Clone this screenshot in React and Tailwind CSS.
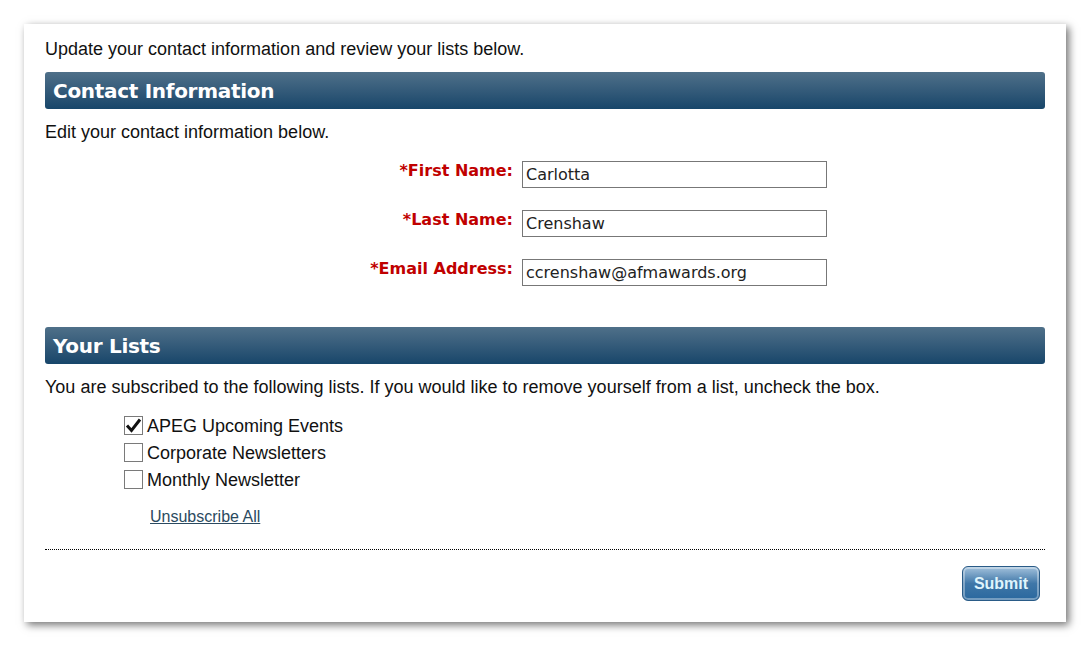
import { useState } from "react";

const fields = [
  { label: "*First Name:", value: "Carlotta" },
  { label: "*Last Name:", value: "Crenshaw" },
  { label: "*Email Address:", value: "ccrenshaw@afmawards.org" },
];

const SectionBar = ({ title }) => (
  <div className="h-[37px] rounded-[3px] bg-gradient-to-b from-[#4f7089] to-[#17466a] px-[8px] flex items-center">
    <h2 className="text-white text-[20px] font-bold font-['DejaVu_Sans',sans-serif] tracking-[-0.3px]">
      {title}
    </h2>
  </div>
);

const CheckBox = ({ checked, onChange }) => (
  <button
    onClick={onChange}
    className="w-[19px] h-[19px] border border-[#7a7a7a] bg-white flex items-center justify-center shrink-0"
  >
    {checked && (
      <svg width="17" height="17" viewBox="0 0 17 17">
        <path d="M2 8.5 L6.5 13.5 L15 2.5" fill="none" stroke="#111" strokeWidth="3" />
      </svg>
    )}
  </button>
);

export default function App() {
  const [lists, setLists] = useState([
    { name: "APEG Upcoming Events", on: true },
    { name: "Corporate Newsletters", on: false },
    { name: "Monthly Newsletter", on: false },
  ]);

  const toggle = (i) =>
    setLists(lists.map((l, j) => (j === i ? { ...l, on: !l.on } : l)));

  return (
    <div className="min-h-[648px] bg-white pt-[24px] pl-[24px] font-['Liberation_Sans',Arial,sans-serif] text-[#111]">
      <div className="w-[1042px] h-[598px] bg-white shadow-[3px_3px_8px_rgba(0,0,0,0.55)] px-[21px] pt-[15px]">
        <p className="text-[18px] leading-[20px]">
          Update your contact information and review your lists below.
        </p>

        {/* Contact Information */}
        <div className="mt-[13px]">
          <SectionBar title="Contact Information" />
        </div>
        <p className="text-[18px] leading-[20px] mt-[13px]">Edit your contact information below.</p>

        <div className="mt-[19px] flex flex-col gap-[22px]">
          {fields.map((f) => (
            <div key={f.label} className="flex items-start">
              <label className="w-[468px] text-right text-[#c00000] text-[16px] font-bold font-['DejaVu_Sans',sans-serif] leading-[20px]">
                {f.label}
              </label>
              <input
                defaultValue={f.value}
                className="ml-[9px] w-[305px] h-[27px] border border-[#777] px-[3px] text-[16px] text-[#222] font-['DejaVu_Sans',sans-serif] outline-none"
              />
            </div>
          ))}
        </div>

        {/* Your Lists */}
        <div className="mt-[41px]">
          <SectionBar title="Your Lists" />
        </div>
        <p className="text-[18px] leading-[20px] mt-[13px]">
          You are subscribed to the following lists. If you would like to remove yourself from a list, uncheck the box.
        </p>

        <div className="mt-[18px] ml-[79px] flex flex-col gap-[7px]">
          {lists.map((l, i) => (
            <div key={l.name} className="flex items-center gap-[4px] h-[20px]">
              <CheckBox checked={l.on} onChange={() => toggle(i)} />
              <span className="text-[18px] leading-[20px] mt-[2px]">{l.name}</span>
            </div>
          ))}
        </div>

        <a href="#" className="block mt-[18px] ml-[105px] text-[16px] leading-[20px] text-[#2b4a60] underline w-fit">
          Unsubscribe All
        </a>

        <div className="mt-[22px] border-t border-dotted border-black" />

        <div className="flex justify-end mt-[16px] pr-[5px]">
          <button className="w-[78px] h-[35px] rounded-[6px] border border-[#2a5b87] bg-gradient-to-b from-[#a3c2dc] via-[#3f77a8] to-[#2a689e] text-[#dff4fc] text-[16px] font-bold shadow-[inset_0_0_0_2px_rgba(255,255,255,0.35)]">
            Submit
          </button>
        </div>
      </div>
    </div>
  );
}
